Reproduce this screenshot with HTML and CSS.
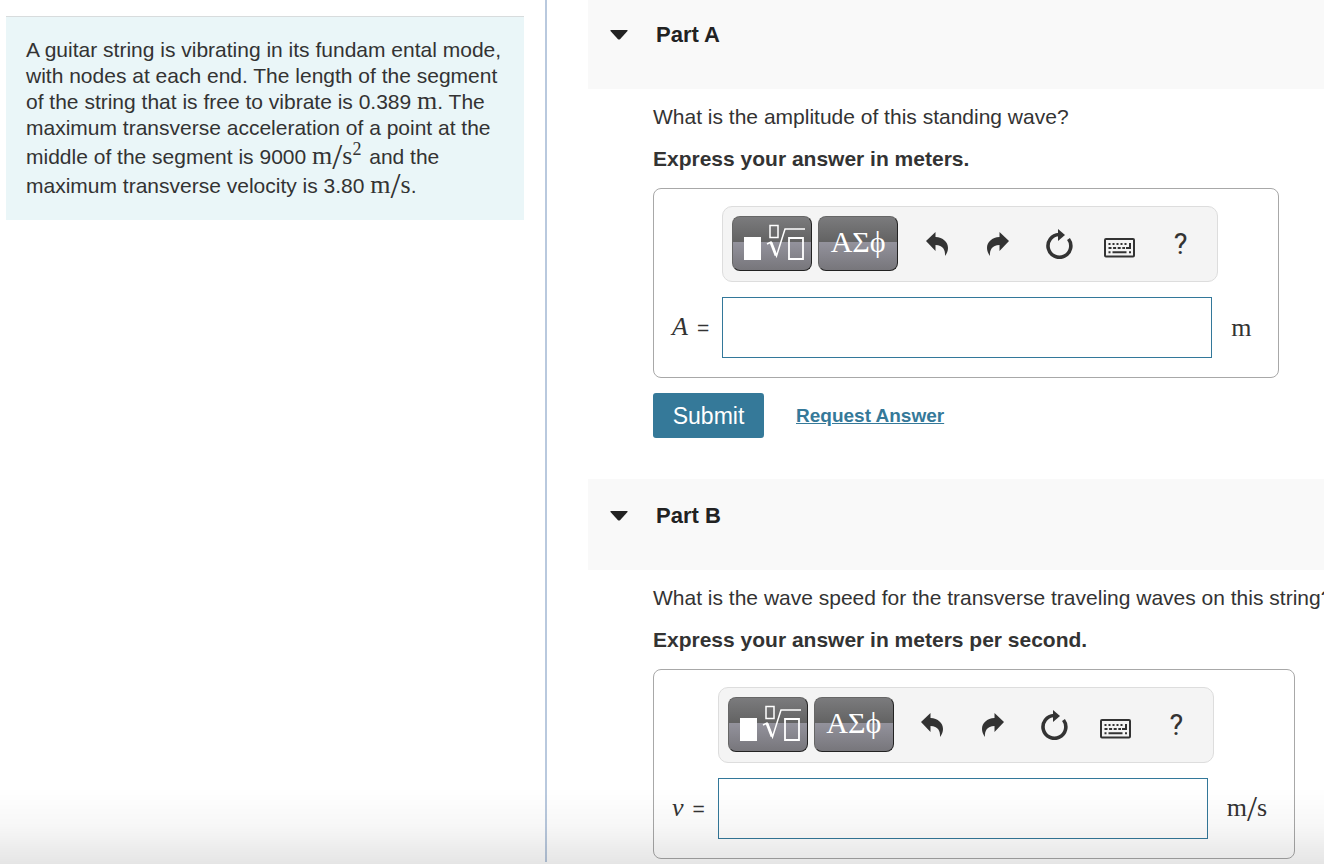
FILE: index.html
```html
<!DOCTYPE html>
<html lang="en">
<head>
    <meta charset="UTF-8">
    <title>Standing waves on a guitar string</title>
    <meta name="viewport" content="width=device-width, initial-scale=1">
    <link rel="stylesheet" href="styles.css">
</head>
<body>

<!-- icons shared by both answer toolbars -->
<svg class="sprite" aria-hidden="true">
    <symbol id="icon-caret" viewBox="0 0 18 10">
        <path d="M1 0h16q1 0 .5 1L10 9.200q-1 .8-2 0L.5 1Q0 0 1 0z" fill="currentColor"/>
    </symbol>
    <symbol id="icon-templates" viewBox="0 0 66 40">
        <path d="M5 14h17v23H5z" fill="#fff"/>
        <g fill="none" stroke="#fff">
            <path d="M31 2.500h8v12h-8z" stroke-width="1.500"/>
            <path d="M50 15h14v21H50z" stroke-width="1.800"/>
            <path d="M28 21l4-2 5.500 14 8.500-27h20" stroke-width="1.500"/>
            <path d="M32 19.500l5 13" stroke-width="2.800"/>
        </g>
    </symbol>
    <symbol id="icon-undo" viewBox="0 0 22 24">
        <path d="M0 9L9.500 0v5C17 5.500 22 10 22 16c0 3-1 5-3 8 .5-6-2-11-9.500-11v6z" fill="currentColor"/>
    </symbol>
    <symbol id="icon-redo" viewBox="0 0 22 24">
        <path d="M22 9L12.500 0v5C5 5.500 0 10 0 16c0 3 1 5 3 8-.5-6 2-11 9.500-11v6z" fill="currentColor"/>
    </symbol>
    <symbol id="icon-reset" viewBox="0 0 28 30">
        <path d="M14 5.500A11.400 11.400 0 1 0 23.500 10" fill="none" stroke="currentColor" stroke-width="3.600"/>
        <path d="M13 0l7 6-7 6z" fill="currentColor"/>
    </symbol>
    <symbol id="icon-keyboard" viewBox="0 0 31 20">
        <rect x="1" y="1" width="29" height="17.500" rx="1" fill="none" stroke="currentColor" stroke-width="2"/>
        <g fill="none" stroke="currentColor" stroke-width="2">
            <path d="M4.500 6H23" stroke-dasharray="2 2"/>
            <path d="M4.500 10H21" stroke-dasharray="3 1.600"/>
            <path d="M22 10h4V5"/>
            <path d="M4.500 14.300h2M8.500 14.300h14M25 14.300h2"/>
        </g>
    </symbol>
</svg>

<div class="page">
    <aside class="sidebar">
        <div class="problem">
            A guitar string is vibrating in its fundam ental mode,<br>
            with nodes at each end. The length of the segment<br>
            of the string that is free to vibrate is 0.389 <span class="math">m</span>. The<br>
            maximum transverse acceleration of a point at the<br>
            <span class="tall">middle of the segment is 9000 <span class="math">m<span class="slash">/</span>s<sup>2</sup></span> and the</span><br>
            maximum transverse velocity is 3.80 <span class="math">m<span class="slash">/</span>s</span>.
        </div>
    </aside>

    <main class="parts">
        <section class="part">
            <header class="part-header">
                <button class="toggle" type="button" aria-label="Collapse Part A"><svg class="caret"><use href="#icon-caret"/></svg></button>
                <h2>Part A</h2>
            </header>
            <form class="part-body">
                <p>What is the amplitude of this standing wave?</p>
                <p><strong>Express your answer in meters.</strong></p>
                <div class="answer">
                    <div class="toolbar">
                        <button class="palette" type="button" aria-label="Templates"><svg class="templates"><use href="#icon-templates"/></svg></button>
                        <button class="palette" type="button">ΑΣϕ</button>
                        <div class="tools">
                            <button class="tool" type="button" aria-label="Undo"><svg class="arrow"><use href="#icon-undo"/></svg></button>
                            <button class="tool" type="button" aria-label="Redo"><svg class="arrow"><use href="#icon-redo"/></svg></button>
                            <button class="tool" type="button" aria-label="Reset"><svg class="reset"><use href="#icon-reset"/></svg></button>
                            <button class="tool" type="button" aria-label="Keyboard shortcuts"><svg class="keyboard"><use href="#icon-keyboard"/></svg></button>
                            <button class="tool" type="button">?</button>
                        </div>
                    </div>
                    <label for="amplitude"><i class="math">A</i> =</label>
                    <input id="amplitude" type="text">
                    <span class="math unit">m</span>
                </div>
                <div class="actions">
                    <button class="submit" type="button">Submit</button>
                    <a href="#">Request Answer</a>
                </div>
            </form>
        </section>

        <section class="part">
            <header class="part-header">
                <button class="toggle" type="button" aria-label="Collapse Part B"><svg class="caret"><use href="#icon-caret"/></svg></button>
                <h2>Part B</h2>
            </header>
            <form class="part-body">
                <p>What is the wave speed for the transverse traveling waves on this string?</p>
                <p><strong>Express your answer in meters per second.</strong></p>
                <div class="answer">
                    <div class="toolbar">
                        <button class="palette" type="button" aria-label="Templates"><svg class="templates"><use href="#icon-templates"/></svg></button>
                        <button class="palette" type="button">ΑΣϕ</button>
                        <div class="tools">
                            <button class="tool" type="button" aria-label="Undo"><svg class="arrow"><use href="#icon-undo"/></svg></button>
                            <button class="tool" type="button" aria-label="Redo"><svg class="arrow"><use href="#icon-redo"/></svg></button>
                            <button class="tool" type="button" aria-label="Reset"><svg class="reset"><use href="#icon-reset"/></svg></button>
                            <button class="tool" type="button" aria-label="Keyboard shortcuts"><svg class="keyboard"><use href="#icon-keyboard"/></svg></button>
                            <button class="tool" type="button">?</button>
                        </div>
                    </div>
                    <label for="speed"><i class="math">v</i> =</label>
                    <input id="speed" type="text">
                    <span class="math unit">m<span class="slash">/</span>s</span>
                </div>
            </form>
        </section>
    </main>
</div>
<div class="fade"></div>

</body>
</html>
```

FILE: styles.css
```css
* {
    box-sizing: border-box;
}

body {
    margin: 0;
    height: 100vh;
    overflow: hidden;
    background: #fff;
    color: #333;
    font-family: "Liberation Sans", Arial, sans-serif;
    font-size: 21px;
    line-height: 26px;
}

button,
input {
    margin: 0;
    padding: 0;
    border: 0;
    background: none;
    color: inherit;
    font: inherit;
}

svg {
    display: block;
}

.sprite {
    display: none;
}

.page {
    display: flex;
    height: 100%;
}

/* problem statement */

.sidebar {
    flex: 0 0 547px;
    height: calc(100% - 2px);
    padding: 16px 21px 0 6px;
    border-right: 2px solid #b9c9de;
}

.problem {
    padding: 20px 0 21px 20px;
    border-top: 1px solid #d8dcdd;
    background: #eaf6f8;
    white-space: nowrap;
}

.tall {
    line-height: 32px;
}

.math {
    font-family: "Liberation Serif", "Times New Roman", serif;
    font-size: 26px;
    line-height: 0;
}

.math sup {
    margin-right: 2px;
    font-size: 18px;
    vertical-align: 9px;
}

.slash {
    font-size: 36px;
    vertical-align: -5px;
}

/* parts */

.parts {
    flex: 1;
    min-width: 0;
    height: 100%;
    margin-left: 41px;
    overflow: hidden;
}

.part-header {
    display: flex;
    align-items: flex-start;
    gap: 28px;
    height: 91px;
    padding: 24px 22px;
    background: #f9f9f9;
    color: #222;
}

.part:first-child .part-header {
    height: 89px;
    padding-top: 22px;
}

.part-header h2 {
    margin: 0;
    font-size: 22px;
}

.toggle {
    height: 26px;
}

.caret {
    width: 18px;
    height: 10px;
}

.part-body {
    padding: 15px 0 41px 65px;
    white-space: nowrap;
}

.part-body p {
    margin: 0 0 16px;
}

.answer {
    display: grid;
    grid-template-columns: auto 496px auto;
    column-gap: 13px;
    row-gap: 15px;
    align-items: center;
    width: fit-content;
    padding: 17px 27px 19px 18px;
    border: 1px solid #a8a8a8;
    border-radius: 8px;
}

.toolbar {
    grid-column: 2;
    display: flex;
    gap: 6px;
    height: 76px;
    padding: 9px 5px 9px 9px;
    border: 1px solid #ddd;
    border-radius: 10px;
    background: #f4f4f4;
}

.palette {
    flex: none;
    display: flex;
    justify-content: center;
    width: 80px;
    height: 55px;
    border: 1px solid #666;
    border-right-color: #222;
    border-bottom-color: #222;
    border-radius: 8px;
    background: linear-gradient(#7b7b7d, #626262 48%, #93929c 48%, #77767b);
    color: #fff;
    font-family: "Liberation Serif", serif;
    font-size: 30px;
    line-height: 50px;
}

.templates {
    width: 66px;
    height: 40px;
    margin-top: 6px;
}

.tools {
    display: grid;
    grid-template-columns: repeat(5, 61px);
    padding-left: 2px;
}

.tool {
    display: flex;
    align-items: center;
    justify-content: center;
    height: 55px;
    font-family: Roboto, sans-serif;
    font-size: 29px;
}

.arrow {
    width: 22px;
    height: 24px;
}

.reset {
    width: 28px;
    height: 30px;
}

.keyboard {
    width: 31px;
    height: 20px;
    margin-top: 8px;
}

.answer label {
    grid-column: 1;
    display: flex;
    align-items: baseline;
    gap: 9px;
}

.answer input {
    width: 490px;
    height: 61px;
    padding: 0 12px;
    border: 1px solid #33789a;
}

.actions {
    display: flex;
    align-items: center;
    gap: 32px;
    margin-top: 15px;
}

.submit {
    width: 111px;
    height: 45px;
    border-radius: 3px;
    background: #357999;
    color: #fff;
    font-size: 23px;
}

.actions a {
    color: #357999;
    font-size: 19px;
    font-weight: bold;
}

/* soft shade along the bottom of the window */

.fade {
    position: fixed;
    right: 0;
    bottom: 0;
    left: 0;
    height: 76px;
    background: linear-gradient(rgba(0, 0, 0, 0), rgba(0, 0, 0, 0.03) 50%, rgba(0, 0, 0, 0.1));
    pointer-events: none;
}
```
